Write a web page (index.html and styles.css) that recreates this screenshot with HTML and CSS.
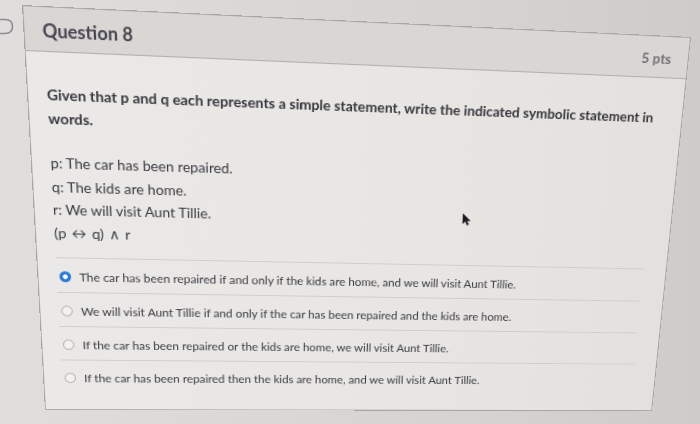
FILE: index.html
```html
<!DOCTYPE html>
<html>
<head>
<meta charset="utf-8">
<link rel="stylesheet" href="styles.css">
</head>
<body>
<div class="page">
  <svg class="marker" width="14" height="17" viewBox="0 0 14 17"><path d="M-6 1.5 H5 Q12.5 1.5 12.5 8.5 Q12.5 15.5 5 15.5 H-6" fill="none" stroke="#8c8b92" stroke-width="1.6"/></svg>
  <div class="card">
    <div class="card-header">
      <h2 class="q-title">Question 8</h2>
      <span class="q-pts">5 pts</span>
    </div>
    <div class="card-body">
      <p class="q-text">Given that p and q each represents a simple statement, write the indicated symbolic statement in words.</p>
      <div class="defs">
        <div>p: The car has been repaired.</div>
        <div>q: The kids are home.</div>
        <div>r: We will visit Aunt Tillie.</div>
        <div class="formula">(p ↔ q) ∧ r</div>
      </div>
      <ul class="answers">
        <li class="answer"><span class="radio checked"></span><span>The car has been repaired if and only if the kids are home, and we will visit Aunt Tillie.</span></li>
        <li class="answer"><span class="radio"></span><span>We will visit Aunt Tillie if and only if the car has been repaired and the kids are home.</span></li>
        <li class="answer"><span class="radio"></span><span>If the car has been repaired or the kids are home, we will visit Aunt Tillie.</span></li>
        <li class="answer"><span class="radio"></span><span>If the car has been repaired then the kids are home, and we will visit Aunt Tillie.</span></li>
      </ul>
    </div>
    <svg class="cursor" width="9" height="13" viewBox="0 0 9 13"><path d="M1 1 L1 11 L3.5 8.5 L5.5 12.5 L7 11.8 L5 8 L8.5 8 Z" fill="#1c1c22" stroke="#1c1c22" stroke-width="0.6" stroke-linejoin="round"/></svg>
  </div>
</div>
</body>
</html>
```

FILE: styles.css
```css
html, body {
  margin: 0;
  padding: 0;
}

body {
  width: 700px;
  height: 424px;
  overflow: hidden;
  background: linear-gradient(to right, #e1dddc, #d6d2d0 70%, #cfcbc9);
  font-family: Lato, "Noto Sans", sans-serif;
  color: #3b3b42;
}

.page {
  display: flex;
  align-items: flex-start;
  box-sizing: border-box;
  height: 424px;
  padding-top: 5px;
}

.marker {
  flex: none;
  margin-top: 13px;
  margin-right: 8px;
}

/* the photo is taken at an angle: the card is drawn flat and projected */
.card {
  position: relative;
  flex: none;
  width: 640px;
  height: 395px;
  box-sizing: border-box;
  background: linear-gradient(to right, #ebe9e7, #e8e6e3 60%, #e3e0dd);
  border: 1px solid #aaa6a4;
  transform-origin: 0 0;
  transform: matrix3d(1.131656, 0.054130, 0, 0.00012906, 0.064484, 1.135486, 0, 0.00027202, 0, 0, 1, 0, 0, 0, 0, 1);
}

.card-header {
  display: flex;
  justify-content: space-between;
  align-items: center;
  height: 40px;
  box-sizing: border-box;
  padding: 2px 17px 0 16px;
  background: #dad6d4;
  border-bottom: 1px solid #b3afad;
}

.q-title {
  margin: 0;
  font-size: 16.5px;
  font-weight: 700;
  color: #45454f;
}

.q-pts {
  font-size: 14px;
  font-weight: 700;
  color: #707076;
}

.card-body {
  padding: 28px 24px 0 17px;
}

.q-text {
  margin: 0 0 20px;
  font-size: 13.8px;
  font-weight: 700;
  line-height: 22px;
  color: #37373e;
}

.defs {
  font-size: 13.7px;
  line-height: 22.7px;
  color: #3a3a42;
}

.formula {
  font-size: 14px;
  word-spacing: 1.5px;
}

.answers {
  list-style: none;
  margin: 12px 0 0;
  padding: 0;
}

.answer {
  display: flex;
  align-items: center;
  gap: 8px;
  height: 35px;
  box-sizing: border-box;
  padding: 4px 0 0 3px;
  border-top: 1px solid #d0cecb;
  font-size: 11.8px;
  color: #3a3a42;
}

.radio {
  flex: none;
  width: 11px;
  height: 11px;
  box-sizing: border-box;
  border-radius: 50%;
  border: 1px solid #abaaac;
  background: #f2f1ef;
}

.radio.checked {
  border: none;
  background: radial-gradient(circle, #ffffff 0 2px, #2b78d2 2.6px);
}

.cursor {
  position: absolute;
  left: 418px;
  top: 181px;
}
```
